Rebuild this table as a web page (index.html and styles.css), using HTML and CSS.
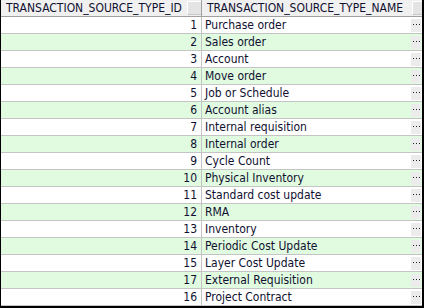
FILE: index.html
```html
<!DOCTYPE html>
<html>
<head>
<meta charset="utf-8">
<link rel="stylesheet" href="styles.css">
</head>
<body>
<div class="grid">
  <div class="hcell h1"><span class="htext">TRANSACTION_SOURCE_TYPE_ID</span><span class="hbtn"></span></div>
  <div class="hcell h2"><span class="htext">TRANSACTION_SOURCE_TYPE_NAME</span><span class="hbtn"></span></div>

  <div class="cell id">1</div><div class="cell name"><span>Purchase order</span><span class="dots"></span></div>
  <div class="cell id alt">2</div><div class="cell name alt"><span>Sales order</span><span class="dots"></span></div>
  <div class="cell id">3</div><div class="cell name"><span>Account</span><span class="dots"></span></div>
  <div class="cell id alt">4</div><div class="cell name alt"><span>Move order</span><span class="dots"></span></div>
  <div class="cell id">5</div><div class="cell name"><span>Job or Schedule</span><span class="dots"></span></div>
  <div class="cell id alt">6</div><div class="cell name alt"><span>Account alias</span><span class="dots"></span></div>
  <div class="cell id">7</div><div class="cell name"><span>Internal requisition</span><span class="dots"></span></div>
  <div class="cell id alt">8</div><div class="cell name alt"><span>Internal order</span><span class="dots"></span></div>
  <div class="cell id">9</div><div class="cell name"><span>Cycle Count</span><span class="dots"></span></div>
  <div class="cell id alt">10</div><div class="cell name alt"><span>Physical Inventory</span><span class="dots"></span></div>
  <div class="cell id">11</div><div class="cell name"><span>Standard cost update</span><span class="dots"></span></div>
  <div class="cell id alt">12</div><div class="cell name alt"><span>RMA</span><span class="dots"></span></div>
  <div class="cell id">13</div><div class="cell name"><span>Inventory</span><span class="dots"></span></div>
  <div class="cell id alt">14</div><div class="cell name alt"><span>Periodic Cost Update</span><span class="dots"></span></div>
  <div class="cell id">15</div><div class="cell name"><span>Layer Cost Update</span><span class="dots"></span></div>
  <div class="cell id alt">17</div><div class="cell name alt"><span>External Requisition</span><span class="dots"></span></div>
  <div class="cell id">16</div><div class="cell name"><span>Project Contract</span><span class="dots"></span></div>
</div>
</body>
</html>
```
FILE: styles.css
```css
html, body {
  margin: 0;
  padding: 0;
  background: #ffffff;
}
.grid {
  width: 424px;
  height: 308px;
  box-sizing: border-box;
  border-left: 1px solid #000;
  border-right: 2px solid #000;
  border-bottom: 2px solid #000;
  display: grid;
  grid-template-columns: 201px 220px;
  grid-template-rows: 17px repeat(17, 17px);
  font-family: "DejaVu Sans Condensed", "DejaVu Sans", sans-serif;
  font-stretch: condensed;
  font-size: 12px;
  color: #101030;
}
.hcell {
  background: #f0f0f0;
  border-bottom: 1px solid #a0a0a0;
  display: flex;
  align-items: center;
  justify-content: space-between;
  padding-left: 5px;
  box-sizing: border-box;
  overflow: hidden;
}
.h1 {
  border-right: 1px solid #a0a0a0;
}
.htext {
  white-space: nowrap;
}
.hbtn {
  flex: none;
  width: 13px;
  height: 12px;
  background: #e4e4e4;
  border-top: 1px solid #ffffff;
  border-left: 1px solid #ffffff;
  border-bottom: 1px solid #c8c8c8;
}
.h2 .hbtn {
  width: 9px;
}
.cell {
  border-bottom: 1px solid #c4c4c4;
  box-sizing: border-box;
  background: #ffffff;
  white-space: nowrap;
  display: flex;
  align-items: center;
  overflow: hidden;
}
.cell.alt {
  background: #e0fbe0;
}
.id {
  justify-content: flex-end;
  padding-right: 4px;
  border-right: 1px solid #c4c4c4;
}
.name {
  justify-content: space-between;
  padding-left: 3px;
  padding-right: 1px;
}
.dots {
  flex: none;
  width: 10px;
  height: 13px;
  background: #ececec;
  display: flex;
  align-items: center;
  padding-left: 2px;
  box-sizing: border-box;
}
.dots::before {
  content: "";
  width: 1px;
  height: 1px;
  margin-top: -1px;
  background: #202020;
  box-shadow: 3px 0 0 #202020, 6px 0 0 #202020;
}
```
